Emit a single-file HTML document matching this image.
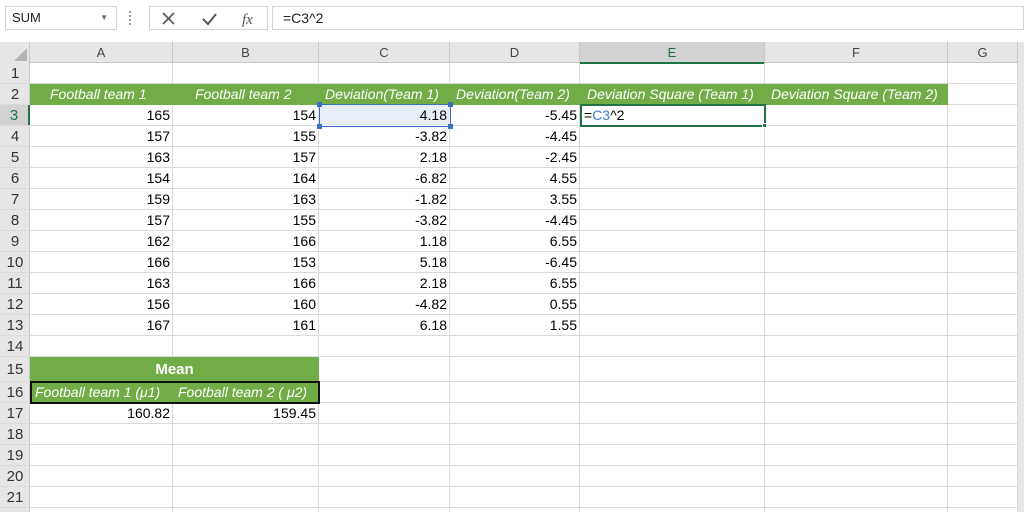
<!DOCTYPE html><html><head><style>
body{margin:0;width:1024px;height:512px;overflow:hidden;background:#fff;font-family:"Liberation Sans",sans-serif;position:relative}
.a{position:absolute;box-sizing:border-box}
.c{position:absolute;box-sizing:border-box;font-size:14px;line-height:21px;white-space:nowrap;overflow:visible;padding:0 3px}
.r{text-align:right}
.h{color:#444;font-size:13px;text-align:center}
.g{color:#fff;font-style:italic;padding-left:6px}
</style></head><body>
<div class="a" style="left:0;top:0;width:1024px;height:42px;background:#fff"></div>
<div class="a" style="left:5px;top:6px;width:112px;height:24px;border:1px solid #d4d4d4;font-size:13px;line-height:22px;padding-left:6px;color:#222">SUM<span style="position:absolute;right:8px;top:0;font-size:8px;color:#666">▼</span></div>
<div class="a" style="left:129px;top:11px;width:3px;height:14px;border-left:2px dotted #999"></div>
<div class="a" style="left:149px;top:6px;width:119px;height:24px;border:1px solid #d4d4d4"></div>
<svg class="a" style="left:160px;top:11px" width="100" height="16"><path d="M3 2l11 11M14 2L3 13" stroke="#555" stroke-width="1.6"/><path d="M43 8l5 5 8-10" stroke="#555" stroke-width="2" fill="none"/><text x="82" y="13" font-family="Liberation Serif" font-style="italic" font-size="15" fill="#555">fx</text></svg>
<div class="a" style="left:272px;top:6px;width:752px;height:24px;border:1px solid #d4d4d4;font-size:14px;line-height:22px;padding-left:10px;color:#222">=C3^2</div>
<div class="a" style="left:0;top:42px;width:1024px;height:21px;background:#e6e6e6;border-bottom:1px solid #c8c8c8"></div>
<div class="a" style="left:1018px;top:42px;width:6px;height:470px;background:#e6e6e6"></div>
<div class="a" style="left:0;top:42px;width:30px;height:470px;background:#e6e6e6;border-right:1px solid #c8c8c8"></div>
<svg class="a" style="left:14px;top:48px" width="14" height="14"><path d="M13 0V13H0Z" fill="#b5b5b5"/></svg>
<div id="g"></div>
<script>
var cols=[30,173,319,450,580,765,948,1018],names="ABCDEFG";
var rows=[63];for(var i=1;i<=21;i++){var h=21;if(i==15)h=25;rows.push(rows[i-1]+h);}
var s="";
for(var j=0;j<7;j++){s+='<div class="c h" style="left:'+cols[j]+'px;top:42px;width:'+(cols[j+1]-cols[j])+'px;border-right:1px solid #c8c8c8;'+(j==4?'background:#d2d2d2;border-bottom:2px solid #217346;height:22px;color:#217346':'')+'">'+names[j]+'</div>';
 s+='<div class="a" style="left:'+(cols[j+1]-1)+'px;top:63px;width:1px;height:449px;background:#dadada"></div>';}
for(var i=1;i<=21;i++){var t=rows[i-1],h=rows[i]-t;
 s+='<div class="c h" style="left:0;top:'+t+'px;width:30px;height:'+h+'px;line-height:'+h+'px;font-size:15px;color:#333;'+(i==3?'background:#d2d2d2;border-right:2px solid #217346;color:#217346':'')+'">'+i+'</div>';
 s+='<div class="a" style="left:0;top:'+(rows[i]-1)+'px;width:1018px;height:1px;background:#dadada"></div>';}
function cell(c,r,txt,cls,st){var t=rows[r-1];s+='<div class="c '+(cls||'')+'" style="left:'+cols[c]+'px;top:'+t+'px;width:'+(cols[c+1]-cols[c])+'px;height:'+(rows[r]-t)+'px;'+(st||'')+'">'+txt+'</div>';}
s+='<div class="a" style="left:30px;top:84px;width:918px;height:21px;background:#70ad47"></div>';
var hd=["Football team 1","Football team 2","Deviation(Team 1)","Deviation(Team 2)","Deviation Square (Team 1)","Deviation Square (Team 2)"];
var pl=[20,22,6,6,7,6];
for(var j=0;j<6;j++)cell(j,2,hd[j],"g","padding-left:"+pl[j]+"px");
var A=[165,157,163,154,159,157,162,166,163,156,167],B=[154,155,157,164,163,155,166,153,166,160,161],
C=["4.18","-3.82","2.18","-6.82","-1.82","-3.82","1.18","5.18","2.18","-4.82","6.18"],D=["-5.45","-4.45","-2.45","4.55","3.55","-4.45","6.55","-6.45","6.55","0.55","1.55"];
for(var k=0;k<11;k++){cell(0,k+3,A[k],"r");cell(1,k+3,B[k],"r");cell(2,k+3,C[k],"r",k==0?"background:#e8eef8;":"");cell(3,k+3,D[k],"r");}
s+='<div class="a" style="left:319px;top:104px;width:132px;height:23px;border:1px solid #3a6fc4"></div>';
[[317,102],[448,102],[317,124],[448,124]].forEach(function(p){s+='<div class="a" style="left:'+p[0]+'px;top:'+p[1]+'px;width:5px;height:5px;background:#3a6fc4"></div>'});
cell(4,3,'=<span style="color:#3a7fd4">C3</span>^2',"","padding-left:4px");
s+='<div class="a" style="left:580px;top:104px;width:186px;height:23px;border:2px solid #217346"></div><div class="a" style="left:762px;top:123px;width:5px;height:5px;background:#217346;border:1px solid #fff"></div>';
s+='<div class="a" style="left:30px;top:357px;width:289px;height:46px;background:#70ad47"></div>';
s+='<div class="c" style="left:30px;top:357px;width:289px;height:25px;line-height:25px;text-align:center;color:#fff;font-weight:bold;font-size:15px">Mean</div>';
s+='<div class="a" style="left:30px;top:381px;width:290px;height:23px;border:2px solid #111"></div>';
cell(0,16,"Football team 1 (μ1)","g","padding-left:5px;font-size:14px");cell(1,16,"Football team 2 ( μ2)","g","padding-left:5px;font-size:14px");
cell(0,17,"160.82","r");cell(1,17,"159.45","r");
document.getElementById("g").innerHTML=s;
</script>
</body></html>
